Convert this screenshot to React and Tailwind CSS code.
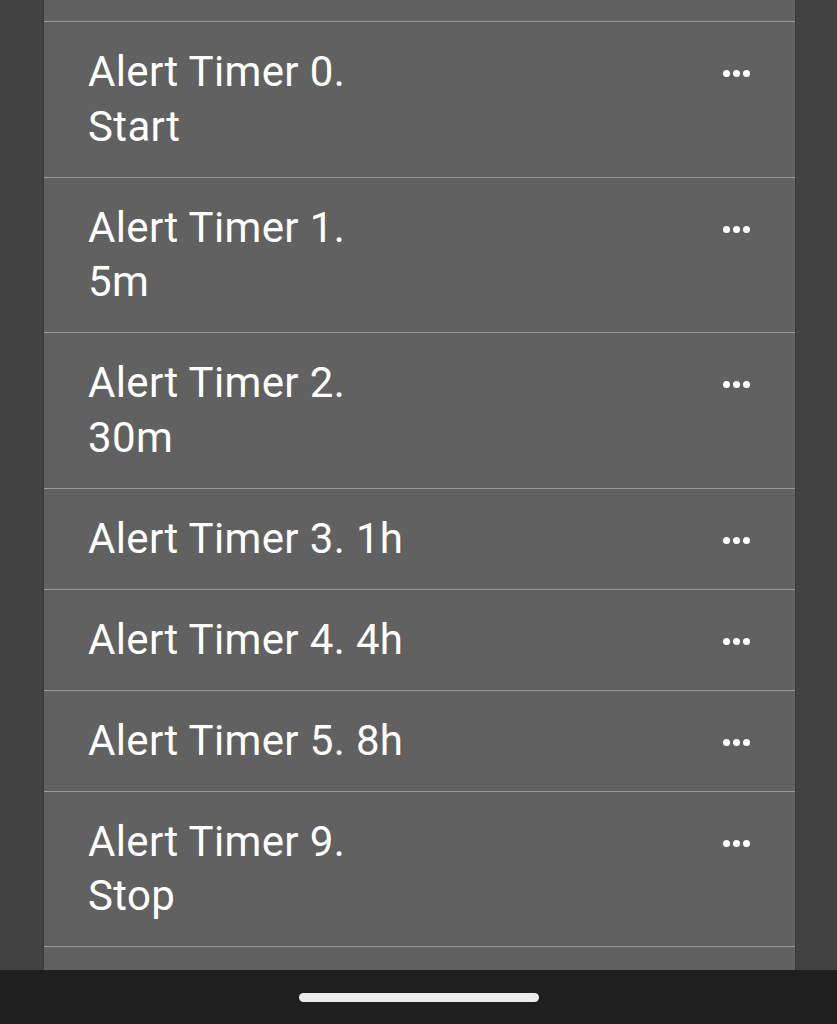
const TIMERS = [
  { id: 0, label: 'Alert Timer 0.', value: 'Start', wrap: true },
  { id: 1, label: 'Alert Timer 1.', value: '5m', wrap: true },
  { id: 2, label: 'Alert Timer 2.', value: '30m', wrap: true },
  { id: 3, label: 'Alert Timer 3.', value: '1h', wrap: false },
  { id: 4, label: 'Alert Timer 4.', value: '4h', wrap: false },
  { id: 5, label: 'Alert Timer 5.', value: '8h', wrap: false },
  { id: 9, label: 'Alert Timer 9.', value: 'Stop', wrap: true },
];

function MoreDots() {
  return (
    <div className="flex h-[54.5px] items-center gap-[3px] pt-[3px]">
      <span className="block h-[7px] w-[7px] rounded-full bg-white" />
      <span className="block h-[7px] w-[7px] rounded-full bg-white" />
      <span className="block h-[7px] w-[7px] rounded-full bg-white" />
    </div>
  );
}

function TimerRow({ timer }) {
  return (
    <div className="flex items-start justify-between border-b border-[#9a9a9a] pl-[44px] pr-[45px] pt-[23px] pb-[22.5px]">
      <div className="text-[42px] leading-[54.5px] tracking-[0.35px] text-white">
        {timer.wrap ? (
          <>
            <div>{timer.label}</div>
            <div>{timer.value}</div>
          </>
        ) : (
          <div>{timer.label} {timer.value}</div>
        )}
      </div>
      <MoreDots />
    </div>
  );
}

export default function App() {
  return (
    <div
      className="flex h-[1024px] w-[837px] flex-col overflow-hidden bg-[#424242]"
      style={{ fontFamily: 'Roboto, "Noto Sans", sans-serif' }}
    >
      {/* list panel */}
      <div className="ml-[43px] flex w-[753px] flex-1 flex-col overflow-hidden border-x border-[#3a3a3a] bg-[#616161]">
        <div className="h-[22px] shrink-0 border-b border-[#9a9a9a]" />
        {TIMERS.map(t => (
          <TimerRow key={t.id} timer={t} />
        ))}
        <div className="flex-1" />
      </div>

      {/* nav bar */}
      <div className="flex h-[54px] shrink-0 items-center justify-center bg-[#1f1f1f]">
        <div className="h-[9px] w-[240px] rounded-full bg-[#ececec]" />
      </div>
    </div>
  );
}
